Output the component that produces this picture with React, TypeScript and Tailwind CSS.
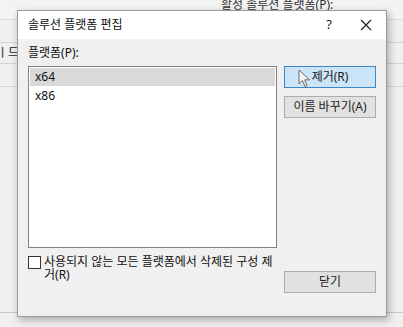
import React from 'react';

const font = { fontFamily: '"Noto Sans", "Noto Sans CJK KR", sans-serif' };

function Cursor() {
  return (
    <svg width="13" height="20" viewBox="0 0 13 20" className="absolute left-[298px] top-[69px]">
      <path d="M1 1 L1 15 L4.5 11.5 L7 17.5 L9 16.6 L6.6 10.8 L11.5 10.8 Z" fill="#f4f4f4" stroke="#6b6b6b" strokeWidth="1" strokeLinejoin="round" />
    </svg>
  );
}

function Btn({ label, active }: { label: string; active?: boolean }) {
  return (
    <button
      className={`h-[22px] w-[92px] text-[12px] leading-none text-[#1b1b1b] border ${
        active ? 'bg-[#cce4f7] border-[#3c87c9]' : 'bg-[#e1e1e1] border-[#adadad]'
      }`}
    >
      {label}
    </button>
  );
}

export default function App() {
  return (
    <div className="relative w-[403px] h-[327px] overflow-hidden bg-[#f0f0f0]" style={font}>
      {/* window behind the dialog */}
      <div className="absolute left-0 top-0 w-[403px] h-[20px] bg-[#f3f3f3] border-b border-[#dcdcdc]" />
      <div className="absolute left-[221px] top-[-4px] text-[12px] text-[#333]">활성 솔루션 플랫폼(P):</div>
      <div className="absolute left-0 top-[42px] w-[403px] border-t border-[#d4d4d4]" />
      <div className="absolute left-0 top-[63px] w-[403px] border-t border-[#d4d4d4]" />
      <div className="absolute left-0 top-[86px] w-[403px] border-t border-[#d4d4d4]" />
      <div className="absolute left-[-3px] top-[44px] text-[12px] text-[#222]">ㅣ드</div>
      <div className="absolute left-0 top-[312px] w-[403px] border-t border-[#c8c8c8]" />

      {/* dialog */}
      <div className="relative ml-[17px] mt-[10px] w-[370px] h-[307px] flex flex-col bg-[#f0f0f0] border border-[#9a9a9a] shadow-[2px_3px_8px_rgba(0,0,0,0.3)]">
        <div className="h-[28px] bg-white flex items-center pl-[10px] pr-[14px]">
          <span className="text-[12px] text-[#111] flex-1">솔루션 플랫폼 편집</span>
          <span className="text-[13px] text-[#222] mr-[28px]">?</span>
          <svg width="12" height="12" viewBox="0 0 12 12">
            <path d="M1 1 L11 11 M11 1 L1 11" stroke="#222" strokeWidth="1.2" />
          </svg>
        </div>

        <div className="flex flex-1 px-[10px] gap-[7px]">
          <div className="w-[249px] flex flex-col">
            <div className="pt-[6px] h-[27px] text-[12px] leading-[16px] text-[#111]">플랫폼(P):</div>
            <div className="h-[182px] bg-white border border-[#828282] p-[1px] text-[12px] text-[#111]">
              <div className="h-[18px] bg-[#d9d9d9] pl-[5px] leading-[18px]">x64</div>
              <div className="h-[18px] pl-[5px] leading-[18px] mt-[1px]">x86</div>
            </div>
            <div className="flex mt-[7px] gap-[3px]">
              <div className="w-[13px] h-[13px] bg-white border border-[#333] mt-[1px] shrink-0" />
              <div className="w-[232px] text-[12px] leading-[13px] text-[#111]">
                사용되지 않는 모든 플랫폼에서 삭제된 구성 제거(R)
              </div>
            </div>
          </div>

          <div className="w-[92px] flex flex-col pt-[27px] gap-[8px]">
            <Btn label="제거(R)" active />
            <Btn label="이름 바꾸기(A)" />
            <div className="flex-1" />
            <div className="mb-[23px]">
              <Btn label="닫기" />
            </div>
          </div>
        </div>
      </div>

      <Cursor />
    </div>
  );
}
